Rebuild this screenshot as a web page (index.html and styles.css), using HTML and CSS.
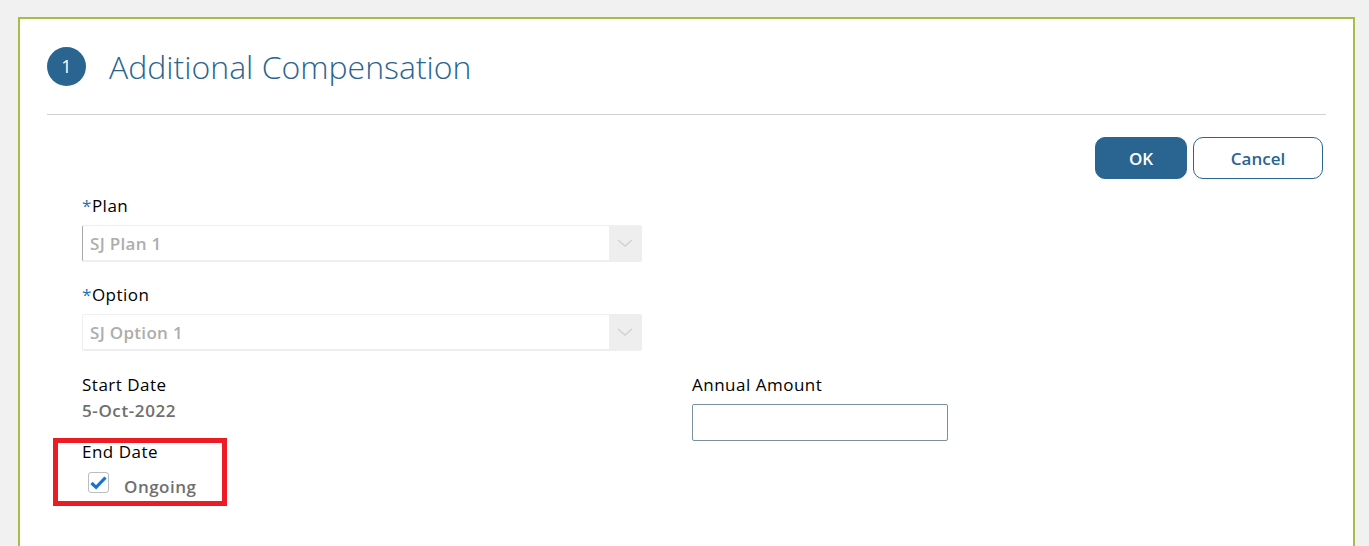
FILE: index.html
```html
<!DOCTYPE html>
<html lang="en">
<head>
	<meta charset="UTF-8">
	<title>Additional Compensation</title>
	<link rel="stylesheet" href="styles.css">
</head>
<body>
	<div class="card">
		<div class="head">
			<span class="step">1</span>
			<h1 class="title">Additional Compensation</h1>
		</div>
		<div class="actions">
			<a href="##" class="btn btn-ok">OK</a>
			<a href="##" class="btn btn-cancel">Cancel</a>
		</div>
		<div class="form">
			<div class="field">
				<label class="lbl"><span class="req">*</span>Plan</label>
				<div class="select select-first">
					<span class="select-val">SJ Plan 1</span>
					<span class="select-btn">
						<svg width="18" height="10" viewBox="0 0 18 10"><path d="M2 2l7 6 7-6" fill="none" stroke="#d2d2d4" stroke-width="1.5"/></svg>
					</span>
				</div>
			</div>
			<div class="field">
				<label class="lbl"><span class="req">*</span>Option</label>
				<div class="select">
					<span class="select-val">SJ Option 1</span>
					<span class="select-btn">
						<svg width="18" height="10" viewBox="0 0 18 10"><path d="M2 2l7 6 7-6" fill="none" stroke="#d2d2d4" stroke-width="1.5"/></svg>
					</span>
				</div>
			</div>
			<div class="cols">
				<div class="col-left">
					<label class="lbl">Start Date</label>
					<div class="date-val">5-Oct-2022</div>
					<label class="lbl lbl-end">End Date</label>
					<div class="ongoing">
						<span class="check">
							<svg width="17" height="14" viewBox="0 0 17 14"><path d="M1.5 7l4.6 4.3 9.4-9.8" fill="none" stroke="#1a73c9" stroke-width="3.2"/></svg>
						</span>
						<span class="ongoing-txt">Ongoing</span>
					</div>
				</div>
				<div class="col-right">
					<label class="lbl">Annual Amount</label>
					<input type="text" class="amount">
				</div>
			</div>
		</div>
		<!-- red box drawn over the screenshot -->
		<div class="mark"></div>
	</div>
</body>
</html>
```

FILE: styles.css
```css
html, body {
	margin: 0;
	padding: 0;
	height: 100%;
	overflow: hidden;
}
body {
	background: #f1f1f1;
	font-family: "Open Sans", "Noto Sans", sans-serif;
	padding: 17px 14px 0 18px;
	box-sizing: border-box;
}
.card {
	position: relative;
	box-sizing: border-box;
	height: 100%;
	background: #fff;
	border: 2px solid #a6bd46;
	border-bottom: 0;
	padding: 28px 27px 0 27px;
}
.head {
	display: flex;
	align-items: flex-start;
	gap: 23px;
	height: 67px;
	border-bottom: 1px solid #d0d0d0;
}
.step {
	flex: none;
	width: 39px;
	height: 39px;
	border-radius: 50%;
	background: #2a6591;
	color: #fff;
	font-size: 18px;
	line-height: 39px;
	text-align: center;
}
.title {
	margin: 0;
	font-size: 32px;
	font-weight: 300;
	line-height: 39px;
	color: #2a6591;
}
.actions {
	display: flex;
	justify-content: flex-end;
	gap: 6px;
	padding: 22px 3px 0 0;
}
.btn {
	box-sizing: border-box;
	height: 42px;
	line-height: 41px;
	border-radius: 10px;
	border: 1px solid #2a6591;
	text-align: center;
	font-size: 17px;
	font-weight: 600;
	text-decoration: none;
}
.btn-ok {
	width: 92px;
	background: #2a6591;
	color: #fff;
}
.btn-cancel {
	width: 130px;
	background: #fff;
	color: #2a6591;
}
.form {
	padding: 16px 0 0 35px;
}
.lbl {
	display: block;
	font-size: 17px;
	font-weight: 500;
	letter-spacing: 0.5px;
	line-height: 22px;
	color: #000;
}
.req {
	color: #1f6fb5;
}
.field {
	height: 89px;
}
.select {
	display: flex;
	box-sizing: border-box;
	width: 560px;
	height: 37px;
	margin-top: 8px;
	border: 1px solid #eeeeee;
	border-bottom-width: 2px;
	border-radius: 2px;
}
.select-first {
	border-left: 1px solid #a8a8a8;
}
.select-val {
	flex: 1;
	padding-left: 7px;
	font-size: 17px;
	font-weight: 600;
	letter-spacing: 0.3px;
	line-height: 36px;
	color: #adadad;
}
.select-btn {
	display: flex;
	align-items: center;
	justify-content: center;
	width: 32px;
	background: #eeeeef;
}
.cols {
	display: flex;
	padding-top: 1px;
}
.col-left {
	width: 610px;
}
.date-val {
	margin-top: 4px;
	font-size: 17px;
	font-weight: 600;
	letter-spacing: 0.6px;
	line-height: 22px;
	color: #6f6f6f;
}
.lbl-end {
	margin-top: 19px;
}
.ongoing {
	display: flex;
	align-items: flex-start;
	gap: 15px;
	padding: 9px 0 0 6px;
}
.check {
	display: flex;
	align-items: center;
	justify-content: center;
	box-sizing: border-box;
	width: 21px;
	height: 21px;
	background: #fff;
	border: 1px solid #b9bec4;
	border-radius: 3px;
}
.ongoing-txt {
	padding-top: 4px;
	font-size: 17px;
	font-weight: 600;
	letter-spacing: 0.5px;
	line-height: 22px;
	color: #6f6f6f;
}
.amount {
	display: block;
	box-sizing: border-box;
	width: 256px;
	height: 37px;
	margin-top: 8px;
	padding: 0 6px;
	border: 1px solid #7b8f9f;
	border-radius: 2px;
	background: #fff;
}
.mark {
	position: absolute;
	left: 33px;
	top: 419px;
	box-sizing: border-box;
	width: 174px;
	height: 68px;
	border: 5px solid #ed1c24;
}
```
